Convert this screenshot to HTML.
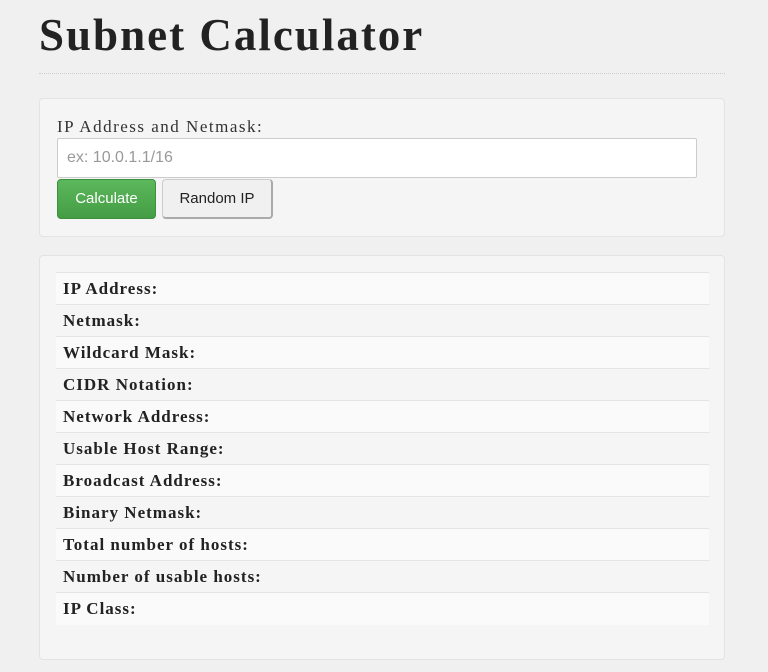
<!DOCTYPE html>
<html><head><style>
body{margin:0;background:#f0f0f0;font-family:"Liberation Serif",serif;color:#222;width:768px;height:672px;overflow:hidden;position:relative}
h1{position:absolute;left:39px;top:9px;margin:0;font-size:45px;font-weight:bold;color:#222;letter-spacing:2px}
.hr{position:absolute;left:39px;top:73px;width:686px;border-top:1px dotted #ccc}
.panel{position:absolute;left:39px;width:686px;background:#f5f5f5;border:1px solid #e3e3e3;border-radius:4px;box-sizing:border-box}
label{position:absolute;left:17px;top:18px;font-size:17px;color:#333;letter-spacing:1.5px}
.inp{position:absolute;left:17px;top:39px;width:640px;height:40px;background:#fff;border:1px solid #ccc;box-sizing:border-box;border-radius:2px;font-family:"Liberation Sans",sans-serif;font-size:16px;color:#999;padding:10px 9px}
.btn{position:absolute;top:80px;height:40px;box-sizing:border-box;font-family:"Liberation Sans",sans-serif;font-size:15px;border-radius:4px;text-align:center;line-height:38px}
.g{left:17px;width:99px;background:#4cae4c;background:linear-gradient(#5cb85c,#449d44);color:#fff;border:1px solid #3e8f3e}
.w{left:122px;width:111px;background:#f0f0f0;color:#222;border:1px solid #ccc;border-right:2px solid #aaa;border-bottom:2px solid #aaa}
table{position:absolute;left:16px;top:16px;width:653px;border-collapse:collapse}
td{height:32px;padding:0 7px;border-top:1px solid #e4e4e4;font-weight:bold;font-size:17px;letter-spacing:1px;box-sizing:border-box}
tr:nth-child(odd) td{background:#fafafa}
</style></head><body>
<h1>Subnet Calculator</h1>
<div class="hr"></div>
<div class="panel" style="top:98px;height:139px">
<label>IP Address and Netmask:</label>
<div class="inp">ex: 10.0.1.1/16</div>
<div class="btn g">Calculate</div>
<div class="btn w">Random IP</div>
</div>
<div class="panel" style="top:255px;height:405px">
<table>
<tr><td>IP Address:</td></tr>
<tr><td>Netmask:</td></tr>
<tr><td>Wildcard Mask:</td></tr>
<tr><td>CIDR Notation:</td></tr>
<tr><td>Network Address:</td></tr>
<tr><td>Usable Host Range:</td></tr>
<tr><td>Broadcast Address:</td></tr>
<tr><td>Binary Netmask:</td></tr>
<tr><td>Total number of hosts:</td></tr>
<tr><td>Number of usable hosts:</td></tr>
<tr><td>IP Class:</td></tr>
</table>
</div>
</body></html>
